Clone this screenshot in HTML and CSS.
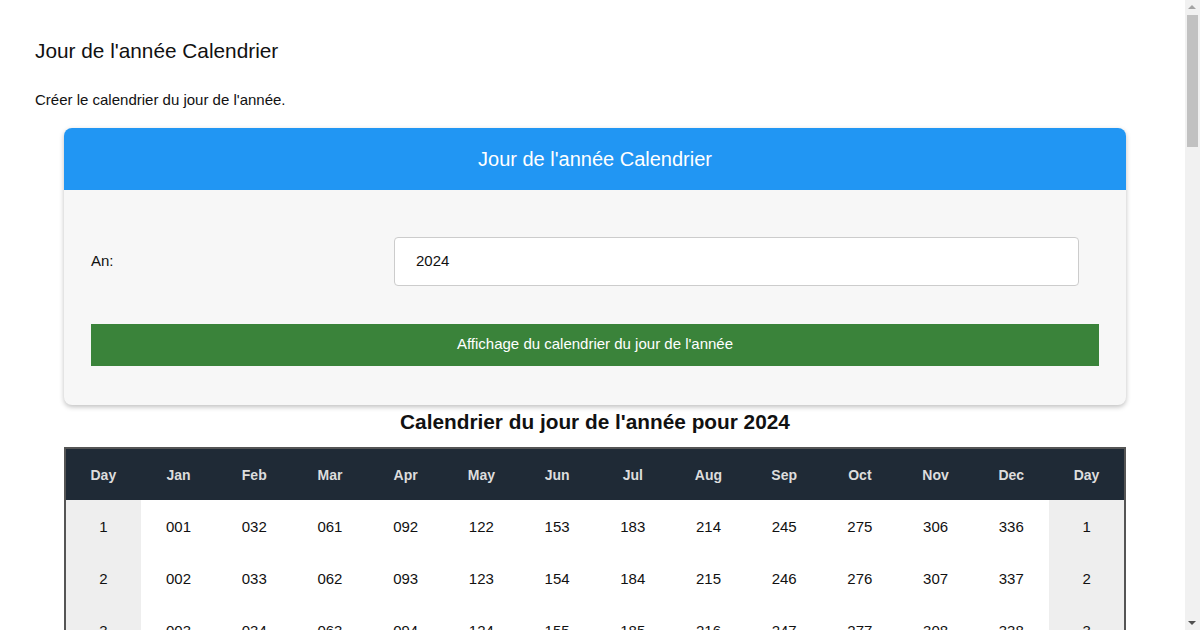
FILE: index.html
```html
<!DOCTYPE html>
<html lang="fr">

<head>
    <meta charset="UTF-8">
    <meta name="viewport" content="width=device-width, initial-scale=1.0">
    <title>Jour de l'année Calendrier</title>
    <link rel="stylesheet" href="styles.css">
</head>

<body>

    <div class="page">
        <h1>Jour de l'année Calendrier</h1>
        <p class="intro">Créer le calendrier du jour de l'année.</p>

        <div class="card">
            <div class="card-header">Jour de l'année Calendrier</div>
            <div class="card-body">
                <div class="form-row">
                    <label for="year">An:</label>
                    <input type="text" id="year" value="2024">
                </div>
                <button type="button" id="showBtn">Affichage du calendrier du jour de l'année</button>
            </div>
        </div>

        <h3 class="table-title" id="tableTitle">Calendrier du jour de l'année pour 2024</h3>

        <table class="doy-table">
            <thead>
                <tr>
                    <th>Day</th>
                    <th>Jan</th>
                    <th>Feb</th>
                    <th>Mar</th>
                    <th>Apr</th>
                    <th>May</th>
                    <th>Jun</th>
                    <th>Jul</th>
                    <th>Aug</th>
                    <th>Sep</th>
                    <th>Oct</th>
                    <th>Nov</th>
                    <th>Dec</th>
                    <th>Day</th>
                </tr>
            </thead>
            <tbody id="tableBody"></tbody>
        </table>
    </div>

    <div class="scrollbar">
        <div class="scroll-arrow up"></div>
        <div class="scroll-thumb"></div>
        <div class="scroll-arrow down"></div>
    </div>

    <script>
        // Build the day-of-year table for the chosen year
        function buildTable(year) {
            const body = document.getElementById('tableBody');
            body.innerHTML = '';

            for (let day = 1; day <= 31; day++) {
                const row = document.createElement('tr');

                const first = document.createElement('td');
                first.className = 'day-col';
                first.textContent = day;
                row.appendChild(first);

                for (let month = 0; month < 12; month++) {
                    const cell = document.createElement('td');
                    const date = new Date(Date.UTC(year, month, day));
                    if (date.getUTCMonth() === month) {
                        const start = Date.UTC(year, 0, 1);
                        const n = Math.round((date - start) / 86400000) + 1;
                        cell.textContent = String(n).padStart(3, '0');
                    }
                    row.appendChild(cell);
                }

                const last = document.createElement('td');
                last.className = 'day-col';
                last.textContent = day;
                row.appendChild(last);

                body.appendChild(row);
            }

            document.getElementById('tableTitle').textContent =
                "Calendrier du jour de l'année pour " + year;
        }

        document.getElementById('showBtn').addEventListener('click', function () {
            const year = parseInt(document.getElementById('year').value, 10);
            if (!isNaN(year)) {
                buildTable(year);
            }
        });

        buildTable(2024);
    </script>

</body>

</html>
```

FILE: styles.css
```css
body {
    font-family: "Liberation Sans", Arial, sans-serif;
    margin: 20px 45px 20px 30px;
    padding: 0;
    background-color: #ffffff;
    color: #111;
}

.page {
    padding: 5px 5px 30px;
    background-color: #ffffff;
    box-shadow: 0 0 12px rgba(0, 0, 0, 0.18);
}

h1 {
    font-size: 20.8px;
    font-weight: normal;
    margin: 8px 0 0;
    line-height: 36px;
}

.intro {
    font-size: 15px;
    margin: 21px 0 0;
    line-height: 20px;
}

.card {
    width: 1062px;
    margin: 18px 0 0 29px;
    border-radius: 8px;
    overflow: hidden;
    background-color: #f7f7f7;
    box-shadow: 0 2px 5px rgba(0, 0, 0, 0.25);
}

.card-header {
    background-color: #2196f3;
    color: #ffffff;
    font-size: 20px;
    text-align: center;
    height: 62px;
    line-height: 62px;
}

.card-body {
    padding: 47px 27px 39px;
}

.form-row {
    display: flex;
    align-items: center;
    margin-bottom: 38px;
}

label {
    width: 303px;
    font-size: 15px;
    margin-bottom: 3px;
}

input[type="text"] {
    width: 685px;
    height: 49px;
    box-sizing: border-box;
    padding: 0 21px 3px;
    border: 1px solid #cccccc;
    border-radius: 4px;
    background-color: #ffffff;
    font-family: "Liberation Sans", Arial, sans-serif;
    font-size: 15px;
    color: #111;
}

button {
    display: block;
    width: 100%;
    height: 42px;
    padding: 0 0 3px;
    border: none;
    background-color: #3a833a;
    color: #ffffff;
    font-family: "Liberation Sans", Arial, sans-serif;
    font-size: 15px;
    cursor: pointer;
}

.table-title {
    width: 1062px;
    text-align: center;
    font-size: 20.8px;
    font-weight: bold;
    margin: 4px 0 0 29px;
    line-height: 26px;
}

.doy-table {
    width: 1062px;
    margin: 12px 0 0 29px;
    border-collapse: collapse;
    border: 2px solid #555555;
    table-layout: fixed;
}

.doy-table th {
    background-color: #1f2a36;
    color: #dddddd;
    font-size: 14px;
    font-weight: bold;
    height: 51px;
    padding: 0;
    text-align: center;
}

.doy-table td {
    font-size: 15px;
    height: 52px;
    padding: 0;
    text-align: center;
    background-color: #ffffff;
}

.doy-table td.day-col {
    background-color: #eeeeee;
}

.scrollbar {
    position: fixed;
    top: 0;
    right: 0;
    width: 15px;
    height: 100%;
    background-color: #f1f1f1;
}

.scroll-thumb {
    position: absolute;
    top: 15px;
    left: 2px;
    width: 11px;
    height: 132px;
    background-color: #c1c1c1;
}

.scroll-arrow {
    position: absolute;
    left: 3px;
    width: 0;
    height: 0;
    border-left: 4.5px solid transparent;
    border-right: 4.5px solid transparent;
}

.scroll-arrow.up {
    top: 5px;
    border-bottom: 4px solid #a3a3a3;
}

.scroll-arrow.down {
    bottom: 5px;
    border-top: 4px solid #505050;
}
```
